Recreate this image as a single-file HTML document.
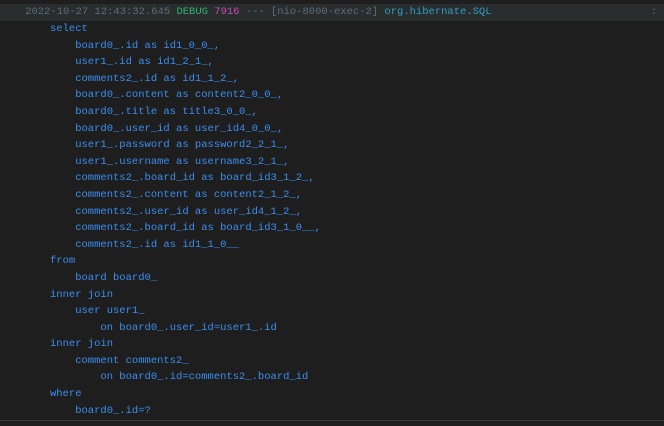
<html><head><style>
body{margin:0;width:664px;height:426px;background:#1e1e1e;overflow:hidden;font-family:"Liberation Mono",monospace;font-size:10.5px;position:relative}
.hd{position:absolute;top:4px;left:0;width:664px;height:17px;background:#2a2d2e;line-height:17px;color:#5a6c7c;white-space:pre;overflow:hidden}
.l{position:absolute;left:0;color:#3c8ef0;white-space:pre;line-height:16.6px}
.bt{position:absolute;left:0;top:420px;width:664px;height:1px;background:#3a3a3a}
</style></head><body>
<div class="hd">    2022-10-27 12:43:32.645 <span style="color:#2fb56c">DEBUG</span> <span style="color:#c24fb2">7916</span> --- [nio-8000-exec-2] <span style="color:#2a9fc6">org.hibernate.SQL</span><span style="position:absolute;left:651px">:</span></div>
<div class="l" style="top:21px;left:50px">select
    board0_.id as id1_0_0_,
    user1_.id as id1_2_1_,
    comments2_.id as id1_1_2_,
    board0_.content as content2_0_0_,
    board0_.title as title3_0_0_,
    board0_.user_id as user_id4_0_0_,
    user1_.password as password2_2_1_,
    user1_.username as username3_2_1_,
    comments2_.board_id as board_id3_1_2_,
    comments2_.content as content2_1_2_,
    comments2_.user_id as user_id4_1_2_,
    comments2_.board_id as board_id3_1_0__,
    comments2_.id as id1_1_0__
from
    board board0_
inner join
    user user1_
        on board0_.user_id=user1_.id
inner join
    comment comments2_
        on board0_.id=comments2_.board_id
where
    board0_.id=?</div>
<div class="bt"></div>
</body></html>
